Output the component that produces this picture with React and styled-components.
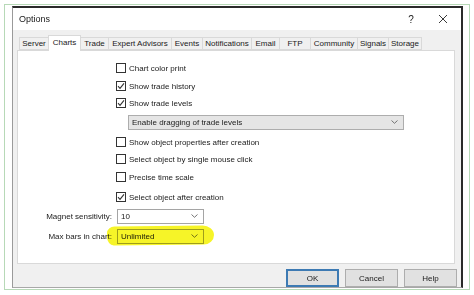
import React from 'react';
import styled, { createGlobalStyle } from 'styled-components';

const GlobalStyle = createGlobalStyle`
  html, body {
    margin: 0;
    background: #fff;
  }
  * {
    box-sizing: border-box;
  }
  body {
    font-family: "Liberation Sans", Arial, sans-serif;
    font-size: 8px;
    color: #1a1a1a;
  }
`;

// 스크린샷 바깥 연두색 테두리
const Frame = styled.div`
  margin: 4px 0 0 4px;
  width: 466px;
  height: 286px;
  border: 1px solid #b7d9b7;
  padding: 1px 6px 1px 7px;
`;

const Dialog = styled.div`
  width: 451px;
  height: 282px;
  display: flex;
  flex-direction: column;
  background: #f0f0f0;
  border-top: 2px solid #2a2a2a;
  border-right: 2px solid #2a2a2a;
  border-left: 1px solid #9a9a9a;
  border-bottom: 1px solid #a8a8a8;
`;

const TitleBar = styled.div`
  height: 22px;
  display: flex;
  align-items: center;
  background: #fff;
  padding: 0 2px 0 6px;
`;

const Title = styled.div`
  font-size: 9px;
  flex: 1;
`;

const TitleButton = styled.div`
  width: 32px;
  height: 22px;
  display: flex;
  align-items: center;
  justify-content: center;
  font-size: 10px;
  color: #222;
`;

const TabStrip = styled.div`
  margin-top: 5px;
  height: 15px;
  display: flex;
  align-items: flex-end;
  padding-left: 7px;
  position: relative;
  z-index: 1;
`;

const Tab = styled.div`
  width: ${(p) => p.$w}px;
  height: ${(p) => (p.$active ? 16 : 13)}px;
  margin-bottom: ${(p) => (p.$active ? -1 : 0)}px;
  display: flex;
  align-items: center;
  justify-content: center;
  background: ${(p) => (p.$active ? '#fff' : '#f0f0f0')};
  border: 1px solid #d9d9d9;
  border-bottom: ${(p) => (p.$active ? 'none' : '1px solid #d9d9d9')};
  margin-left: -1px;
  white-space: nowrap;
  padding-bottom: ${(p) => (p.$active ? 3 : 0)}px;
`;

const Panel = styled.div`
  height: 214px;
  margin: 0 6px 0 4px;
  background: #fff;
  border: 1px solid #d9d9d9;
  padding-top: 9px;
  position: relative;
`;

const Row = styled.div`
  height: 16px;
  margin-top: ${(p) => p.$mt || 0}px;
  display: flex;
  align-items: center;
  padding-left: ${(p) => p.$indent || 0}px;
`;

const Box = styled.div`
  width: 10px;
  height: 10px;
  border: 1px solid #333;
  background: #fff;
  margin-right: 3px;
  display: flex;
  align-items: center;
  justify-content: center;
`;

const Select = styled.div`
  width: ${(p) => p.$w}px;
  height: 15px;
  display: flex;
  align-items: center;
  justify-content: space-between;
  padding: 0 5px 0 3px;
  background: ${(p) => (p.$flat ? '#e5e5e5' : '#fff')};
  border: 1px solid ${(p) => (p.$flat ? '#adadad' : '#a5a5a5')};
`;

const Label = styled.div`
  width: 94px;
  text-align: right;
  margin-right: 5px;
`;

// 형광펜 표시
const Highlight = styled.div`
  position: absolute;
  left: 89px;
  top: 175px;
  width: 107px;
  height: 19px;
  background: #f6f41c;
  mix-blend-mode: multiply;
  border-radius: 8px 12px 11px 7px / 7px 10px 10px 9px;
  transform: rotate(-0.6deg);
  opacity: 0.95;
`;

const Footer = styled.div`
  flex: 1;
  display: flex;
  justify-content: flex-end;
  gap: 6px;
  padding: 5px 4px 0 0;
`;

const Button = styled.div`
  width: 53px;
  height: 18px;
  display: flex;
  align-items: center;
  justify-content: center;
  background: #e1e1e1;
  border: ${(p) => (p.$primary ? '2px solid #3d7ab3' : '1px solid #adadad')};
`;

const Check = () => (
  <svg width="8" height="8" viewBox="0 0 8 8">
    <path d="M1 4.2 L3 6.3 L7 1.3" fill="none" stroke="#333" strokeWidth="1.1" />
  </svg>
);

const Chevron = () => (
  <svg width="7" height="4" viewBox="0 0 7 4">
    <path d="M0.5 0.5 L3.5 3.3 L6.5 0.5" fill="none" stroke="#666" strokeWidth="0.9" />
  </svg>
);

const CheckRow = ({ checked, mt, children }) => (
  <Row $mt={mt} $indent={98}>
    <Box>{checked && <Check />}</Box>
    {children}
  </Row>
);

const tabs = [
  ['Server', 30],
  ['Charts', 33],
  ['Trade', 29],
  ['Expert Advisors', 64],
  ['Events', 32],
  ['Notifications', 50],
  ['Email', 29],
  ['FTP', 32],
  ['Community', 48],
  ['Signals', 32],
  ['Storage', 34],
];

export default function App() {
  return (
    <>
      <GlobalStyle />
      <Frame>
        <Dialog>
          <TitleBar>
            <Title>Options</Title>
            <TitleButton>?</TitleButton>
            <TitleButton>
              <svg width="10" height="10" viewBox="0 0 10 10">
                <path d="M1 1 L9 9 M9 1 L1 9" stroke="#222" strokeWidth="0.9" />
              </svg>
            </TitleButton>
          </TitleBar>

          <TabStrip>
            {tabs.map(([name, w]) => (
              <Tab key={name} $w={w} $active={name === 'Charts'}>
                {name}
              </Tab>
            ))}
          </TabStrip>

          <Panel>
            <CheckRow>Chart color print</CheckRow>
            <CheckRow checked mt={2}>Show trade history</CheckRow>
            <CheckRow checked mt={1}>Show trade levels</CheckRow>
            <Row $mt={3} $indent={110}>
              <Select $w={276} $flat>
                <span>Enable dragging of trade levels</span>
                <Chevron />
              </Select>
            </Row>
            <CheckRow mt={4}>Show object properties after creation</CheckRow>
            <CheckRow mt={1}>Select object by single mouse click</CheckRow>
            <CheckRow mt={2}>Precise time scale</CheckRow>
            <CheckRow checked mt={4}>Select object after creation</CheckRow>
            <Row $mt={3}>
              <Label>Magnet sensitivity:</Label>
              <Select $w={87}>
                <span>10</span>
                <Chevron />
              </Select>
            </Row>
            <Row $mt={4}>
              <Label>Max bars in chart:</Label>
              <Select $w={87}>
                <span>Unlimited</span>
                <Chevron />
              </Select>
            </Row>
            <Highlight />
          </Panel>

          <Footer>
            <Button $primary>OK</Button>
            <Button>Cancel</Button>
            <Button>Help</Button>
          </Footer>
        </Dialog>
      </Frame>
    </>
  );
}
